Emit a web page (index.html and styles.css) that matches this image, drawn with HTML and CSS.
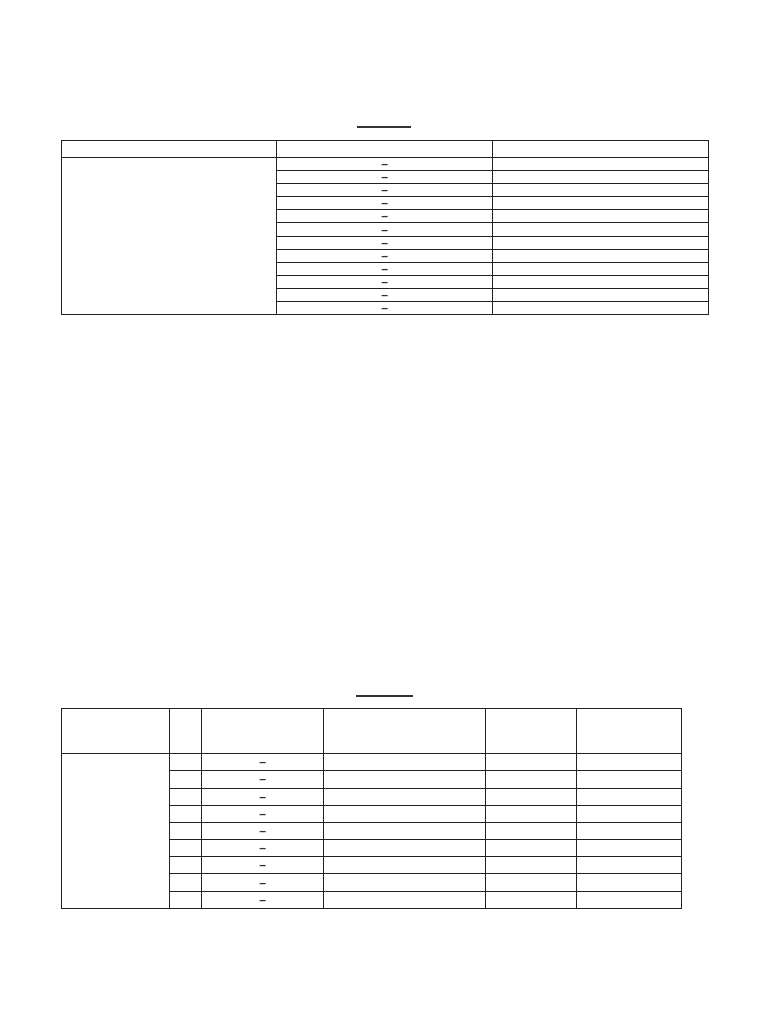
FILE: index.html
```html
<!DOCTYPE html>
<html>
<head>
<meta charset="utf-8">
<link rel="stylesheet" href="styles.css">
</head>
<body>
<div class="page">
  <div class="title title-one"><span class="rule"></span></div>
  <table class="grid grid-one">
    <colgroup><col class="c1a"><col class="c1b"><col class="c1c"></colgroup>
    <tr class="head1"><td></td><td></td><td></td></tr>
    <tr class="row1"><td rowspan="12"></td><td class="dash">–</td><td></td></tr>
    <tr class="row1"><td class="dash">–</td><td></td></tr>
    <tr class="row1"><td class="dash">–</td><td></td></tr>
    <tr class="row1"><td class="dash">–</td><td></td></tr>
    <tr class="row1"><td class="dash">–</td><td></td></tr>
    <tr class="row1"><td class="dash">–</td><td></td></tr>
    <tr class="row1"><td class="dash">–</td><td></td></tr>
    <tr class="row1"><td class="dash">–</td><td></td></tr>
    <tr class="row1"><td class="dash">–</td><td></td></tr>
    <tr class="row1"><td class="dash">–</td><td></td></tr>
    <tr class="row1"><td class="dash">–</td><td></td></tr>
    <tr class="row1"><td class="dash">–</td><td></td></tr>
  </table>

  <div class="title title-two"><span class="rule"></span></div>
  <table class="grid grid-two">
    <colgroup><col class="c2a"><col class="c2b"><col class="c2c"><col class="c2d"><col class="c2e"><col class="c2f"></colgroup>
    <tr class="head2"><td></td><td></td><td></td><td></td><td></td><td></td></tr>
    <tr class="row2"><td rowspan="9"></td><td></td><td class="dash">–</td><td></td><td></td><td></td></tr>
    <tr class="row2"><td></td><td class="dash">–</td><td></td><td></td><td></td></tr>
    <tr class="row2"><td></td><td class="dash">–</td><td></td><td></td><td></td></tr>
    <tr class="row2"><td></td><td class="dash">–</td><td></td><td></td><td></td></tr>
    <tr class="row2"><td></td><td class="dash">–</td><td></td><td></td><td></td></tr>
    <tr class="row2"><td></td><td class="dash">–</td><td></td><td></td><td></td></tr>
    <tr class="row2"><td></td><td class="dash">–</td><td></td><td></td><td></td></tr>
    <tr class="row2"><td></td><td class="dash">–</td><td></td><td></td><td></td></tr>
    <tr class="row2"><td></td><td class="dash">–</td><td></td><td></td><td></td></tr>
  </table>
</div>
</body>
</html>
```
FILE: styles.css
```css
html, body {
  margin: 0;
  padding: 0;
  background: #ffffff;
}
body {
  font-family: "Liberation Sans", Arial, sans-serif;
  color: #222;
}
.page {
  width: 768px;
  padding: 0 0 0 61px;
  box-sizing: border-box;
}
.title {
  display: flex;
  justify-content: center;
  margin-left: -61px;
  width: 768px;
}
.title-one {
  padding-top: 126px;
  padding-bottom: 12px;
}
.title-two {
  padding-top: 380px;
  padding-bottom: 11px;
}
.title-two .rule {
  width: 57px;
}
.rule {
  display: block;
  width: 54px;
  height: 2px;
  background: #333;
}
.grid {
  border-collapse: collapse;
  table-layout: fixed;
  border: 1px solid #444;
}
.grid td {
  border: 1px solid #222;
  padding: 0;
  font-size: 12px;
  line-height: 1;
  text-align: center;
  vertical-align: middle;
}
.grid-one { width: 647px; }
.c1a { width: 215px; }
.c1b { width: 216px; }
.c1c { width: 216px; }
.head1 { height: 17px; }
.row1 { height: 13.1px; }

.grid-two { width: 620px; }
.c2a { width: 108px; }
.c2b { width: 32px; }
.c2c { width: 122px; }
.c2d { width: 162px; }
.c2e { width: 91px; }
.c2f { width: 105px; }
.head2 { height: 45px; }
.row2 { height: 17.2px; }

.dash {
  font-weight: bold;
  font-size: 11px;
  color: #333;
}
```
